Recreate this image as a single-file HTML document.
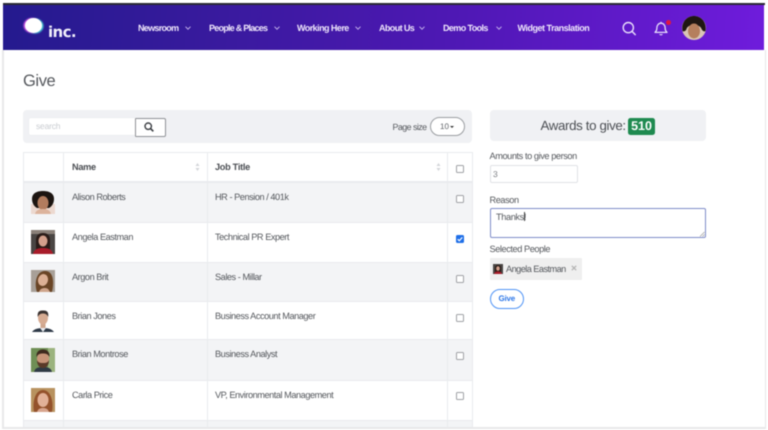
<!DOCTYPE html>
<html><head><meta charset="utf-8"><style>
html,body{margin:0;padding:0;background:#fff;}
body{width:768px;height:430px;overflow:hidden;position:relative;font-family:"Liberation Sans",sans-serif;color:#5a5d63;text-rendering:geometricPrecision;}
#w{position:absolute;left:0;top:0;width:768px;height:430px;filter:blur(.5px);overflow:hidden;}
.a{position:absolute;white-space:nowrap;}
.nav{font-size:9px;color:#eee6fb;font-weight:bold;top:22px;line-height:12px;letter-spacing:-.48px;}
.ch{position:absolute;top:26px;width:6px;height:4px;}
.line{position:absolute;background:#e9ebee;}
.row{position:absolute;left:23px;width:449px;}
.t{position:absolute;font-size:9.2px;color:#55585d;line-height:12px;white-space:nowrap;letter-spacing:-.46px;}
.cb{position:absolute;left:455.5px;width:6px;height:6px;border:1px solid #a0a2a6;border-radius:1.5px;background:#fff;}
.lb{position:absolute;font-size:9.200px;color:#55585d;line-height:12px;white-space:nowrap;letter-spacing:-.42px;}
</style></head><body><div id="w">
<!-- frame -->
<div class="a" style="left:3px;top:3px;width:762px;height:2px;background:#2a2a33"></div>
<div class="a" style="left:2px;top:50px;width:1.5px;height:377px;background:#e8e8ea"></div>
<div class="a" style="left:764.5px;top:50px;width:1.5px;height:377px;background:#e8e8ea"></div>
<div class="a" style="left:2px;top:427px;width:764px;height:1.5px;background:#e8e8ea"></div>
<!-- nav -->
<div class="a" style="left:3px;top:5px;width:761px;height:45px;background:linear-gradient(95deg,#241a8e 0%,#3a1a9f 30%,#4f18b5 60%,#6f1cdc 100%)"></div>
<div class="a" style="left:25px;top:18px;width:17px;height:15px;border-radius:50%;background:#fff;box-shadow:-1.5px 0 1.5px #d85ce8,1.5px .5px 1.5px #4fd6d8"></div>
<div class="a" style="left:48px;top:23px;font-size:15px;font-weight:bold;color:#f2f0fb;line-height:18px;font-family:'DejaVu Sans',sans-serif;letter-spacing:-.6px">inc.</div>
<div class="a nav" style="left:138px;letter-spacing:-.7px">Newsroom</div>
<div class="a nav" style="left:209px;letter-spacing:-.75px">People &amp; Places</div>
<div class="a nav" style="left:297px;letter-spacing:-.55px">Working Here</div>
<div class="a nav" style="left:379px;letter-spacing:-.6px">About Us</div>
<div class="a nav" style="left:443px;letter-spacing:-.6px">Demo Tools</div>
<div class="a nav" style="left:517.5px">Widget Translation</div>
<svg class="ch" style="left:185px" viewBox="0 0 6 4"><path d="M.5.7 3 3.2 5.5.7" fill="none" stroke="#c9b9ee" stroke-width=".9"/></svg>
<svg class="ch" style="left:274px" viewBox="0 0 6 4"><path d="M.5.7 3 3.2 5.5.7" fill="none" stroke="#c9b9ee" stroke-width=".9"/></svg>
<svg class="ch" style="left:355px" viewBox="0 0 6 4"><path d="M.5.7 3 3.2 5.5.7" fill="none" stroke="#c9b9ee" stroke-width=".9"/></svg>
<svg class="ch" style="left:419px" viewBox="0 0 6 4"><path d="M.5.7 3 3.2 5.5.7" fill="none" stroke="#c9b9ee" stroke-width=".9"/></svg>
<svg class="ch" style="left:496px" viewBox="0 0 6 4"><path d="M.5.7 3 3.2 5.5.7" fill="none" stroke="#c9b9ee" stroke-width=".9"/></svg>
<svg class="a" style="left:620px;top:19px" width="18" height="18" viewBox="0 0 18 18"><circle cx="8.3" cy="8.6" r="5.1" fill="none" stroke="#e6dcfa" stroke-width="1.4"/><path d="M12 12.4l3.2 3.2" stroke="#e6dcfa" stroke-width="1.5" stroke-linecap="round"/></svg>
<svg class="a" style="left:652px;top:19px" width="18" height="18" viewBox="0 0 18 18"><path d="M3 13.4c1.4-1.2 1.9-2.4 1.9-4.6 0-2.6 1.7-4.6 4.1-4.6s4.1 2 4.1 4.6c0 2.2.5 3.4 1.9 4.6z" fill="none" stroke="#e6dcfa" stroke-width="1.3" stroke-linejoin="round"/><path d="M7.6 15.2c.7.8 2.1.8 2.8 0" fill="none" stroke="#e6dcfa" stroke-width="1.1"/><path d="M9 2.8v1.4" stroke="#e6dcfa" stroke-width="1.1"/></svg>
<div class="a" style="left:665.5px;top:19.5px;width:5px;height:5px;border-radius:50%;background:#e0163f"></div>
<svg class="a" style="left:682px;top:16px" width="24" height="24" viewBox="0 0 24 24"><circle cx="12" cy="12" r="12" fill="#d9c6b6"/><path d="M.5 15C-1 6 5 0 12 0s13 6 11.500 15c-1 1-3 0-4-2-.5-2-3-4-7.500-4s-7 2-7.500 4c-.5 2-3 3-4 2z" fill="#1f1712"/><ellipse cx="12" cy="15" rx="6" ry="7.500" fill="#b57f5d"/></svg>
<!-- title -->
<div class="a" style="left:23px;top:71px;font-size:16.5px;color:#55585d;line-height:20px;letter-spacing:-.4px">Give</div>
<!-- toolbar -->
<div class="a" style="left:23px;top:110px;width:449px;height:33px;background:#f0f1f4;border-radius:4px"></div>
<div class="a" style="left:29px;top:118px;width:106px;height:17px;background:#fff;border-radius:2px 0 0 2px;box-shadow:0 0 0 .5px #e8e9ec"></div>
<div class="a" style="left:36px;top:121px;font-size:8.500px;color:#c9ccd1;line-height:11px;letter-spacing:-.2px">search</div>
<div class="a" style="left:135px;top:117.500px;width:29px;height:17px;background:#fff;border:1px solid #8f9296;border-radius:1px 2px 2px 1px"></div>
<svg class="a" style="left:143px;top:120.500px" width="12" height="12" viewBox="0 0 12 12"><circle cx="5.200" cy="5.200" r="3.200" fill="none" stroke="#3a3d42" stroke-width="1.400"/><path d="M7.700 7.700l2.600 2.600" stroke="#3a3d42" stroke-width="1.700"/></svg>
<div class="a" style="left:392.500px;top:121px;font-size:8.900px;color:#55585d;line-height:12px;letter-spacing:-.55px">Page size</div>
<div class="a" style="left:430px;top:117px;width:33px;height:17px;background:#fff;border:1px solid #9a9da1;border-radius:10px"></div>
<div class="a" style="left:440px;top:122px;font-size:8px;color:#5f6267;line-height:10px">10</div>
<div class="a" style="left:450px;top:126px;width:0;height:0;border-left:2.200px solid transparent;border-right:2.200px solid transparent;border-top:2.500px solid #333"></div>
<!-- table rows bg -->
<div class="row" style="top:182px;height:40px;background:#f3f4f6"></div>
<div class="row" style="top:262px;height:39px;background:#f3f4f6"></div>
<div class="row" style="top:339px;height:41px;background:#f3f4f6"></div>
<div class="row" style="top:420px;height:7px;background:#f3f4f6"></div>
<!-- lines -->
<div class="line" style="left:23px;top:152px;width:449px;height:1px"></div>
<div class="line" style="left:23px;top:181px;width:449px;height:1.500px"></div>
<div class="line" style="left:23px;top:221.500px;width:449px;height:1px"></div>
<div class="line" style="left:23px;top:262px;width:449px;height:1px"></div>
<div class="line" style="left:23px;top:301px;width:449px;height:1px"></div>
<div class="line" style="left:23px;top:339px;width:449px;height:1px"></div>
<div class="line" style="left:23px;top:380px;width:449px;height:1px"></div>
<div class="line" style="left:23px;top:420px;width:449px;height:1px"></div>
<div class="line" style="left:23px;top:152px;width:1px;height:275px"></div>
<div class="line" style="left:63px;top:152px;width:1px;height:275px"></div>
<div class="line" style="left:206.500px;top:152px;width:1px;height:275px"></div>
<div class="line" style="left:447px;top:152px;width:1px;height:275px"></div>
<div class="line" style="left:471.500px;top:152px;width:1px;height:275px"></div>
<!-- header -->
<div class="t" style="left:72px;top:161px;font-weight:bold;color:#4c4f54;letter-spacing:-.3px">Name</div>
<div class="t" style="left:215px;top:161px;font-weight:bold;color:#4c4f54;letter-spacing:-.3px">Job Title</div>
<svg class="a" style="left:195px;top:163px" width="5" height="8" viewBox="0 0 5 8"><path d="M2.500 0 4.500 3h-4zM2.500 8 4.500 5h-4z" fill="#d3d5d9"/></svg>
<svg class="a" style="left:436px;top:163px" width="5" height="8" viewBox="0 0 5 8"><path d="M2.500 0 4.500 3h-4zM2.500 8 4.500 5h-4z" fill="#d3d5d9"/></svg>
<div class="cb" style="top:165px"></div>
<!-- rows -->
<div class="t" style="left:72px;top:191px">Alison Roberts</div><div class="t" style="left:215px;top:191px">HR - Pension / 401k</div><div class="cb" style="top:195px"></div>
<div class="t" style="left:72px;top:231px">Angela Eastman</div><div class="t" style="left:215px;top:231px">Technical PR Expert</div>
<div class="a" style="left:455.500px;top:235px;width:8px;height:8px;background:#1f6fe8;border-radius:1.500px"></div>
<svg class="a" style="left:455.500px;top:235px" width="8" height="8" viewBox="0 0 8 8"><path d="M1.700 4.200 3.300 5.800 6.300 2.400" fill="none" stroke="#fff" stroke-width="1.200"/></svg>
<div class="t" style="left:72px;top:271px">Argon Brit</div><div class="t" style="left:215px;top:271px">Sales - Millar</div><div class="cb" style="top:275px"></div>
<div class="t" style="left:72px;top:310px">Brian Jones</div><div class="t" style="left:215px;top:310px">Business Account Manager</div><div class="cb" style="top:314px"></div>
<div class="t" style="left:72px;top:348px">Brian Montrose</div><div class="t" style="left:215px;top:348px">Business Analyst</div><div class="cb" style="top:352px"></div>
<div class="t" style="left:72px;top:389px">Carla Price</div><div class="t" style="left:215px;top:389px">VP, Environmental Management</div><div class="cb" style="top:392px"></div>
<!-- avatars -->
<svg class="a" style="left:31px;top:190px" width="24" height="24" viewBox="0 0 24 24"><rect y="14" width="24" height="10" fill="#ecd9d0"/><path d="M1 9C1 3 6 1 12 1s11 2 11 8c0 5-3 8-5 9H6C4 17 1 14 1 9z" fill="#1c1511"/><ellipse cx="12" cy="13" rx="5.500" ry="7" fill="#b27c5e"/><path d="M4 24c1-4 4-5 8-5s7 1 8 5z" fill="#dcb39c"/></svg>
<svg class="a" style="left:31px;top:230px" width="24" height="24" viewBox="0 0 24 24"><rect width="24" height="24" fill="#4a4644"/><rect width="24" height="4" fill="#8a8078"/><path d="M5 24V10c0-5 3-7 7-7s7 2 7 7v14z" fill="#2a1c18"/><ellipse cx="12" cy="11" rx="4.500" ry="5.500" fill="#d3a08c"/><path d="M2 24c1-5 5-6 10-6s9 1 10 6z" fill="#a81c2a"/></svg>
<svg class="a" style="left:31px;top:270px" width="24" height="22" viewBox="0 0 24 22"><rect width="24" height="22" fill="#a8a098"/><path d="M6 22C3 14 5 1 14 1s9 12 7 21z" fill="#6a4526"/><ellipse cx="12" cy="10" rx="5" ry="6" transform="rotate(15 12 10)" fill="#dcb095"/><path d="M8 22c1-3 3-4 6-4s4 2 5 4z" fill="#cfa58c"/></svg>
<svg class="a" style="left:31px;top:309px" width="24" height="24" viewBox="0 0 24 24"><rect width="24" height="24" fill="#fff"/><path d="M1 23c2-3 6-4 11-4s9 1 11 4z" fill="#2f3a48"/><path d="M9 19l3 4 3-4z" fill="#e8eaee"/><rect x="9.500" y="13" width="5" height="6" fill="#cfa68e"/><ellipse cx="12" cy="9" rx="5" ry="6.500" fill="#d6ab92"/><path d="M6.800 8C6 2 9 1.500 12 1.500s6 .5 5.200 6.500C16 5 14 4.500 12 4.500S8 5 6.800 8z" fill="#3a3230"/></svg>
<svg class="a" style="left:31px;top:348px" width="24" height="24" viewBox="0 0 24 24"><rect width="24" height="24" fill="#6f8f55"/><rect x="17" width="7" height="24" fill="#9bb37e"/><path d="M3 24c1-4 4-5 9-5s8 1 9 5z" fill="#2f3a44"/><ellipse cx="12" cy="11" rx="6" ry="7.500" fill="#c79478"/><path d="M6 12c0 6 3 8 6 8s6-2 6-8c-1 2-2 3-6 3s-5-1-6-3z" fill="#5a3a28"/><path d="M5.500 9C5 3 9 1.500 12 1.500S19 3 18.500 9C17 6 15 5.500 12 5.500S7 6 5.500 9z" fill="#3e2a1e"/></svg>
<svg class="a" style="left:31px;top:388px" width="24" height="24" viewBox="0 0 24 24"><rect width="24" height="24" fill="#b8925f"/><path d="M3 24C1 12 5 2 12 2s11 10 9 22z" fill="#94522c"/><ellipse cx="12" cy="12" rx="5.500" ry="7" fill="#e2b198"/><path d="M6 24c1-3 3-4 6-4s5 1 6 4z" fill="#d8a58e"/></svg>
<!-- right panel -->
<div class="a" style="left:490px;top:110px;width:216px;height:31px;background:#f0f1f4;border-radius:4px"></div>
<div class="a" style="left:540.500px;top:118px;font-size:13.300px;color:#4c4f54;line-height:16px;letter-spacing:-.36px">Awards to give:</div>
<div class="a" style="left:628px;top:117.500px;width:27px;height:17px;background:#1f8a50;border-radius:2.500px;color:#fff;font-size:12.500px;font-weight:bold;line-height:17px;text-align:center">510</div>
<div class="lb" style="left:489.500px;top:150px">Amounts to give person</div>
<div class="a" style="left:490px;top:165px;width:86px;height:16px;border:1px solid #e0e2e6;border-radius:2px;background:#fff"></div>
<div class="a" style="left:493px;top:169px;font-size:8.500px;color:#7a7d82;line-height:10px">3</div>
<div class="lb" style="left:489.500px;top:193.500px">Reason</div>
<div class="a" style="left:490px;top:208px;width:214px;height:28px;border:1px solid #7f8cc9;border-radius:2px;background:#fff"></div>
<div class="a" style="left:496px;top:210.500px;font-size:9.200px;color:#55585d;line-height:12px;letter-spacing:-.38px">Thanks!</div>
<div class="a" style="left:524px;top:212px;width:1px;height:9px;background:#444"></div>
<svg class="a" style="left:699px;top:231px" width="6" height="6" viewBox="0 0 6 6"><path d="M1 5.500 5.500 1M3.500 5.500 5.500 3.500" stroke="#9a9a9a" stroke-width=".7"/></svg>
<div class="lb" style="left:489.500px;top:243px">Selected People</div>
<div class="a" style="left:490px;top:258px;width:92px;height:22px;background:#efefef;border-radius:1px"></div>
<svg class="a" style="left:493px;top:264px" width="10" height="10" viewBox="0 0 10 10"><rect width="10" height="10" fill="#4a4644"/><path d="M2 10V4c0-2 1.500-3 3-3s3 1 3 3v6z" fill="#2a1c18"/><ellipse cx="5" cy="4.500" rx="1.800" ry="2.300" fill="#d3a08c"/><path d="M1 10c.5-2 2-2.500 4-2.500s3.500.5 4 2.500z" fill="#a81c2a"/></svg>
<div class="a" style="left:506px;top:263px;font-size:9.200px;color:#55585d;line-height:12px;letter-spacing:-.55px">Angela Eastman</div>
<svg class="a" style="left:571px;top:265px" width="6" height="6" viewBox="0 0 6 6"><path d="M.8.8 5.200 5.200M5.200.8.800 5.200" stroke="#b5b5b5" stroke-width="1.300"/></svg>
<div class="a" style="left:490px;top:289px;width:31.500px;height:18px;border:1px solid #4f93f5;border-radius:10px;background:#fff;color:#2f78e8;font-size:8px;font-weight:bold;line-height:18px;text-align:center;letter-spacing:-.2px">Give</div>
</div></body></html>
